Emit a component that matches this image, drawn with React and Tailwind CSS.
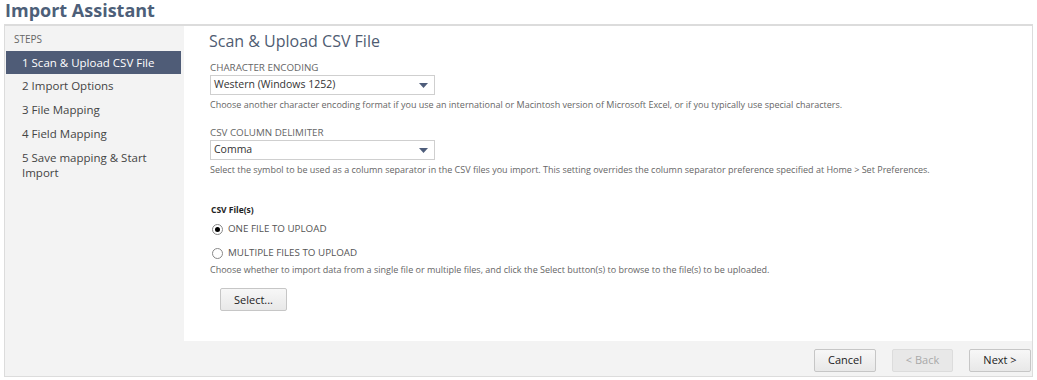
const STEPS = [
  "1 Scan & Upload CSV File",
  "2 Import Options",
  "3 File Mapping",
  "4 Field Mapping",
  "5 Save mapping & Start Import",
];

function Select({ value }) {
  return (
    <div className="flex h-[20px] w-[225px] items-center justify-between border border-[#cfcfcf] bg-white pl-[3px] pr-[6px] text-[10.5px] text-[#333]">
      <span>{value}</span>
      <svg width="9" height="5" viewBox="0 0 9 5">
        <path d="M0 0h9L4.5 5z" fill="#4e5d7b" />
      </svg>
    </div>
  );
}

function Radio({ checked, label }) {
  return (
    <label className="flex items-center gap-[5px] text-[9.8px] text-[#555]">
      <span className="flex size-[11px] items-center justify-center rounded-full border border-[#888] bg-white">
        {checked && <span className="size-[5px] rounded-full bg-black" />}
      </span>
      {label}
    </label>
  );
}

function Button({ children, disabled, className }) {
  return (
    <button
      className={
        "h-[23px] rounded-[2px] border text-[11px] " +
        (disabled
          ? "border-[#dcdcdc] bg-[#e8e8e8] text-[#a8a8a8] "
          : "border-[#c6c6c6] bg-gradient-to-b from-[#f7f7f7] to-[#e8e8e8] text-[#222] ") +
        className
      }
    >
      {children}
    </button>
  );
}

export default function App() {
  return (
    <div className="h-[380px] w-[1037px] bg-white font-['Open_Sans',sans-serif]">
      <h1 className="h-[24px] px-[5px] text-[18px] leading-[20px] font-bold text-[#4d5f79]">Import Assistant</h1>

      <div className="mx-[4px] flex h-[353px] w-[1029px] flex-col border-t-2 border-r border-b border-l border-[#dcdcdc] bg-[#f3f3f3]">
        <div className="flex h-[315px]">
          <aside className="w-[179px] pt-[3px] pr-[3px] pl-[1px]">
            <p className="h-[22px] pl-[8px] text-[10px] leading-[20px] text-[#666]">STEPS</p>
            <nav className="flex flex-col">
              {STEPS.map((s, i) => (
                <div
                  key={s}
                  className={
                    i === 0
                      ? "bg-[#4f5c77] py-[4px] pl-[16px] text-[11.5px] leading-[15px] text-white"
                      : (i === 1 ? "mt-[2px] " : "mt-[5px] ") +
                        "py-[2px] pr-[20px] pl-[16px] text-[11.5px] leading-[15px] text-[#444]"
                  }
                >
                  {s}
                </div>
              ))}
            </nav>
          </aside>

          <main className="flex-1 bg-white pt-[4px] pl-[25px]">
            <h2 className="text-[16px] leading-[22px] text-[#4f5c72]">Scan &amp; Upload CSV File</h2>

            <div className="mt-[10px] pl-[1px]">
              <p className="text-[9.8px] leading-[12px] text-[#666]">CHARACTER ENCODING</p>
              <div className="mt-[1px]">
                <Select value="Western (Windows 1252)" />
              </div>
              <p className="mt-[4px] text-[9px] leading-[12px] text-[#666]">
                Choose another character encoding format if you use an international or Macintosh version of Microsoft Excel, or if you typically use special characters.
              </p>

              <p className="mt-[16px] text-[9.8px] leading-[12px] text-[#666]">CSV COLUMN DELIMITER</p>
              <div className="mt-[1px]">
                <Select value="Comma" />
              </div>
              <p className="mt-[4px] text-[9px] leading-[12px] text-[#666]">
                Select the symbol to be used as a column separator in the CSV files you import. This setting overrides the column separator preference specified at Home &gt; Set Preferences.
              </p>

              <p className="mt-[28px] pl-[1px] text-[8.5px] leading-[12px] font-bold text-[#222]">CSV File(s)</p>
              <div className="mt-[6px] flex flex-col gap-[9px] pl-[2px]">
                <Radio checked label="ONE FILE TO UPLOAD" />
                <Radio label="MULTIPLE FILES TO UPLOAD" />
              </div>
              <p className="mt-[4px] text-[9px] leading-[12px] text-[#666]">
                Choose whether to import data from a single file or multiple files, and click the Select button(s) to browse to the file(s) to be uploaded.
              </p>

              <Button className="mt-[12px] ml-[10px] w-[67px]">Select...</Button>
            </div>
          </main>
        </div>

        <footer className="flex flex-1 items-start justify-end gap-[16px] pt-[8px] pr-[1px]">
          <Button className="w-[62px]">Cancel</Button>
          <Button disabled className="w-[61px]">&lt; Back</Button>
          <Button className="w-[62px]">Next &gt;</Button>
        </footer>
      </div>
    </div>
  );
}
